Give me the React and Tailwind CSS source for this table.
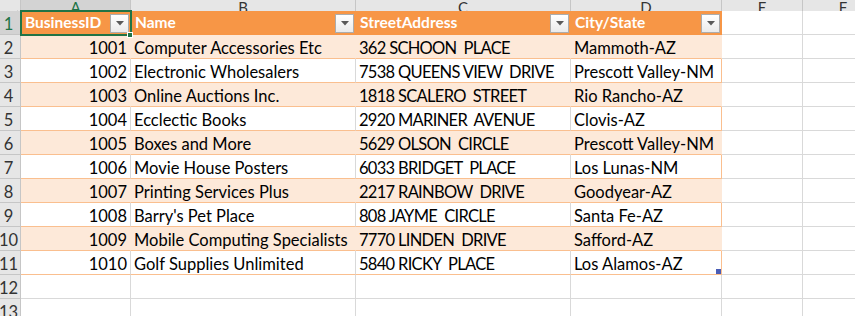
import React from "react";

const rows = [
  ["1001", "Computer Accessories Etc", "362 SCHOON  PLACE", "Mammoth-AZ"],
  ["1002", "Electronic Wholesalers", "7538 QUEENS VIEW  DRIVE", "Prescott Valley-NM"],
  ["1003", "Online Auctions Inc.", "1818 SCALERO  STREET", "Rio Rancho-AZ"],
  ["1004", "Ecclectic Books", "2920 MARINER  AVENUE", "Clovis-AZ"],
  ["1005", "Boxes and More", "5629 OLSON  CIRCLE", "Prescott Valley-NM"],
  ["1006", "Movie House Posters", "6033 BRIDGET  PLACE", "Los Lunas-NM"],
  ["1007", "Printing Services Plus", "2217 RAINBOW  DRIVE", "Goodyear-AZ"],
  ["1008", "Barry's Pet Place", "808 JAYME  CIRCLE", "Santa Fe-AZ"],
  ["1009", "Mobile Computing Specialists", "7770 LINDEN  DRIVE", "Safford-AZ"],
  ["1010", "Golf Supplies Unlimited", "5840 RICKY  PLACE", "Los Alamos-AZ"],
];

// row header + columns A..F, wider than the window on purpose (F is cut off)
const cols = "grid w-[884px] grid-cols-[21px_110px_225px_215px_151px_81px_81px]";

function FilterButton() {
  return (
    <div className="mr-[1px] mb-[1px] flex h-[19px] w-[19px] shrink-0 items-center justify-center border border-[#acacac] bg-gradient-to-b from-white to-[#ebebeb]">
      <svg width="8" height="5" viewBox="0 0 8 5">
        <path d="M0 0h8L4 4.5z" fill="#5a5a5a" />
      </svg>
    </div>
  );
}

function RowHead({ n, active }) {
  return (
    <div
      className={`flex h-[24px] items-end justify-center border-r border-b border-[#c6c6c6] pr-[3px] pb-[2px] leading-none ${
        active ? "bg-[#d3d3d3] text-[#217346]" : "bg-[#e6e6e6] text-[#333]"
      }`}
    >
      {n}
    </div>
  );
}

export default function App() {
  return (
    <div className="relative h-[316px] w-[855px] overflow-hidden bg-white font-['Lato','Liberation_Sans',sans-serif] text-[16.5px] text-black">
      {/* column letters, cut off at the top */}
      <div className={`${cols} h-[11px] overflow-hidden text-[15px] leading-none`}>
        <div className="relative border-r border-b border-[#c6c6c6] bg-[#e6e6e6]">
          <svg className="absolute right-[2px] bottom-[2px]" width="8" height="7" viewBox="0 0 8 7">
            <path d="M8 0v7H0z" fill="#c4c4c4" />
          </svg>
        </div>
        {["A", "B", "C", "D", "E", "F"].map((l) => (
          <div
            key={l}
            className={`flex items-end justify-center border-r border-b border-r-[#c6c6c6] pb-[4px] ${
              l === "A"
                ? "border-b-[#217346] bg-[#d3d3d3] text-[#217346]"
                : "border-b-[#c6c6c6] bg-[#e6e6e6] text-[#333]"
            }`}
          >
            {l}
          </div>
        ))}
      </div>

      {/* table header row */}
      <div className={cols}>
        <RowHead n="1" active />
        {["BusinessID", "Name", "StreetAddress", "City/State"].map((h) => (
          <div
            key={h}
            className="flex h-[24px] items-end justify-between border-r border-b border-[#f79646] bg-[#f79646] pl-[4px] text-[15.5px] font-bold text-white"
          >
            <span className="pb-[4px] leading-none">{h}</span>
            <FilterButton />
          </div>
        ))}
        <div className="border-r border-b border-[#d9d9d9]" />
        <div className="border-r border-b border-[#d9d9d9]" />
      </div>

      {/* table body */}
      {rows.map((r, idx) => {
        const band = idx % 2 === 0;
        const cell = `flex h-[24px] items-end border-r border-b border-b-[#fabf8f] pb-[2px] leading-none whitespace-pre ${
          band ? "bg-[#fde9d9] border-r-[#fde9d9]" : "border-r-[#d9d9d9]"
        }`;
        return (
          <div key={r[0]} className={cols}>
            <RowHead n={idx + 2} />
            <div className={`${cell} justify-end pr-[3px]`}>{r[0]}</div>
            <div className={`${cell} pl-[3px]`}>{r[1]}</div>
            <div className={`${cell} pl-[3px] tracking-[-0.7px]`}>{r[2]}</div>
            <div className={`${cell} relative pl-[3px] border-r-[#fabf8f]`}>
              {r[3]}
              {idx === rows.length - 1 && (
                <div className="absolute right-0 bottom-0 h-[5px] w-[5px] bg-[#4a5db5]" />
              )}
            </div>
            <div className="border-r border-b border-[#d9d9d9]" />
            <div className="border-r border-b border-[#d9d9d9]" />
          </div>
        );
      })}

      {/* empty rows */}
      {[12, 13].map((n) => (
        <div key={n} className={cols}>
          <RowHead n={n} />
          {[0, 1, 2, 3, 4, 5].map((c) => (
            <div key={c} className="h-[24px] border-r border-b border-[#d9d9d9]" />
          ))}
        </div>
      ))}

      {/* active cell selection */}
      <div className="pointer-events-none absolute top-[10px] left-[20px] h-[26px] w-[112px] border-2 border-[#217346]" />
      <div className="absolute top-[32px] left-[127px] h-[6px] w-[6px] border border-white bg-[#217346]" />
    </div>
  );
}
